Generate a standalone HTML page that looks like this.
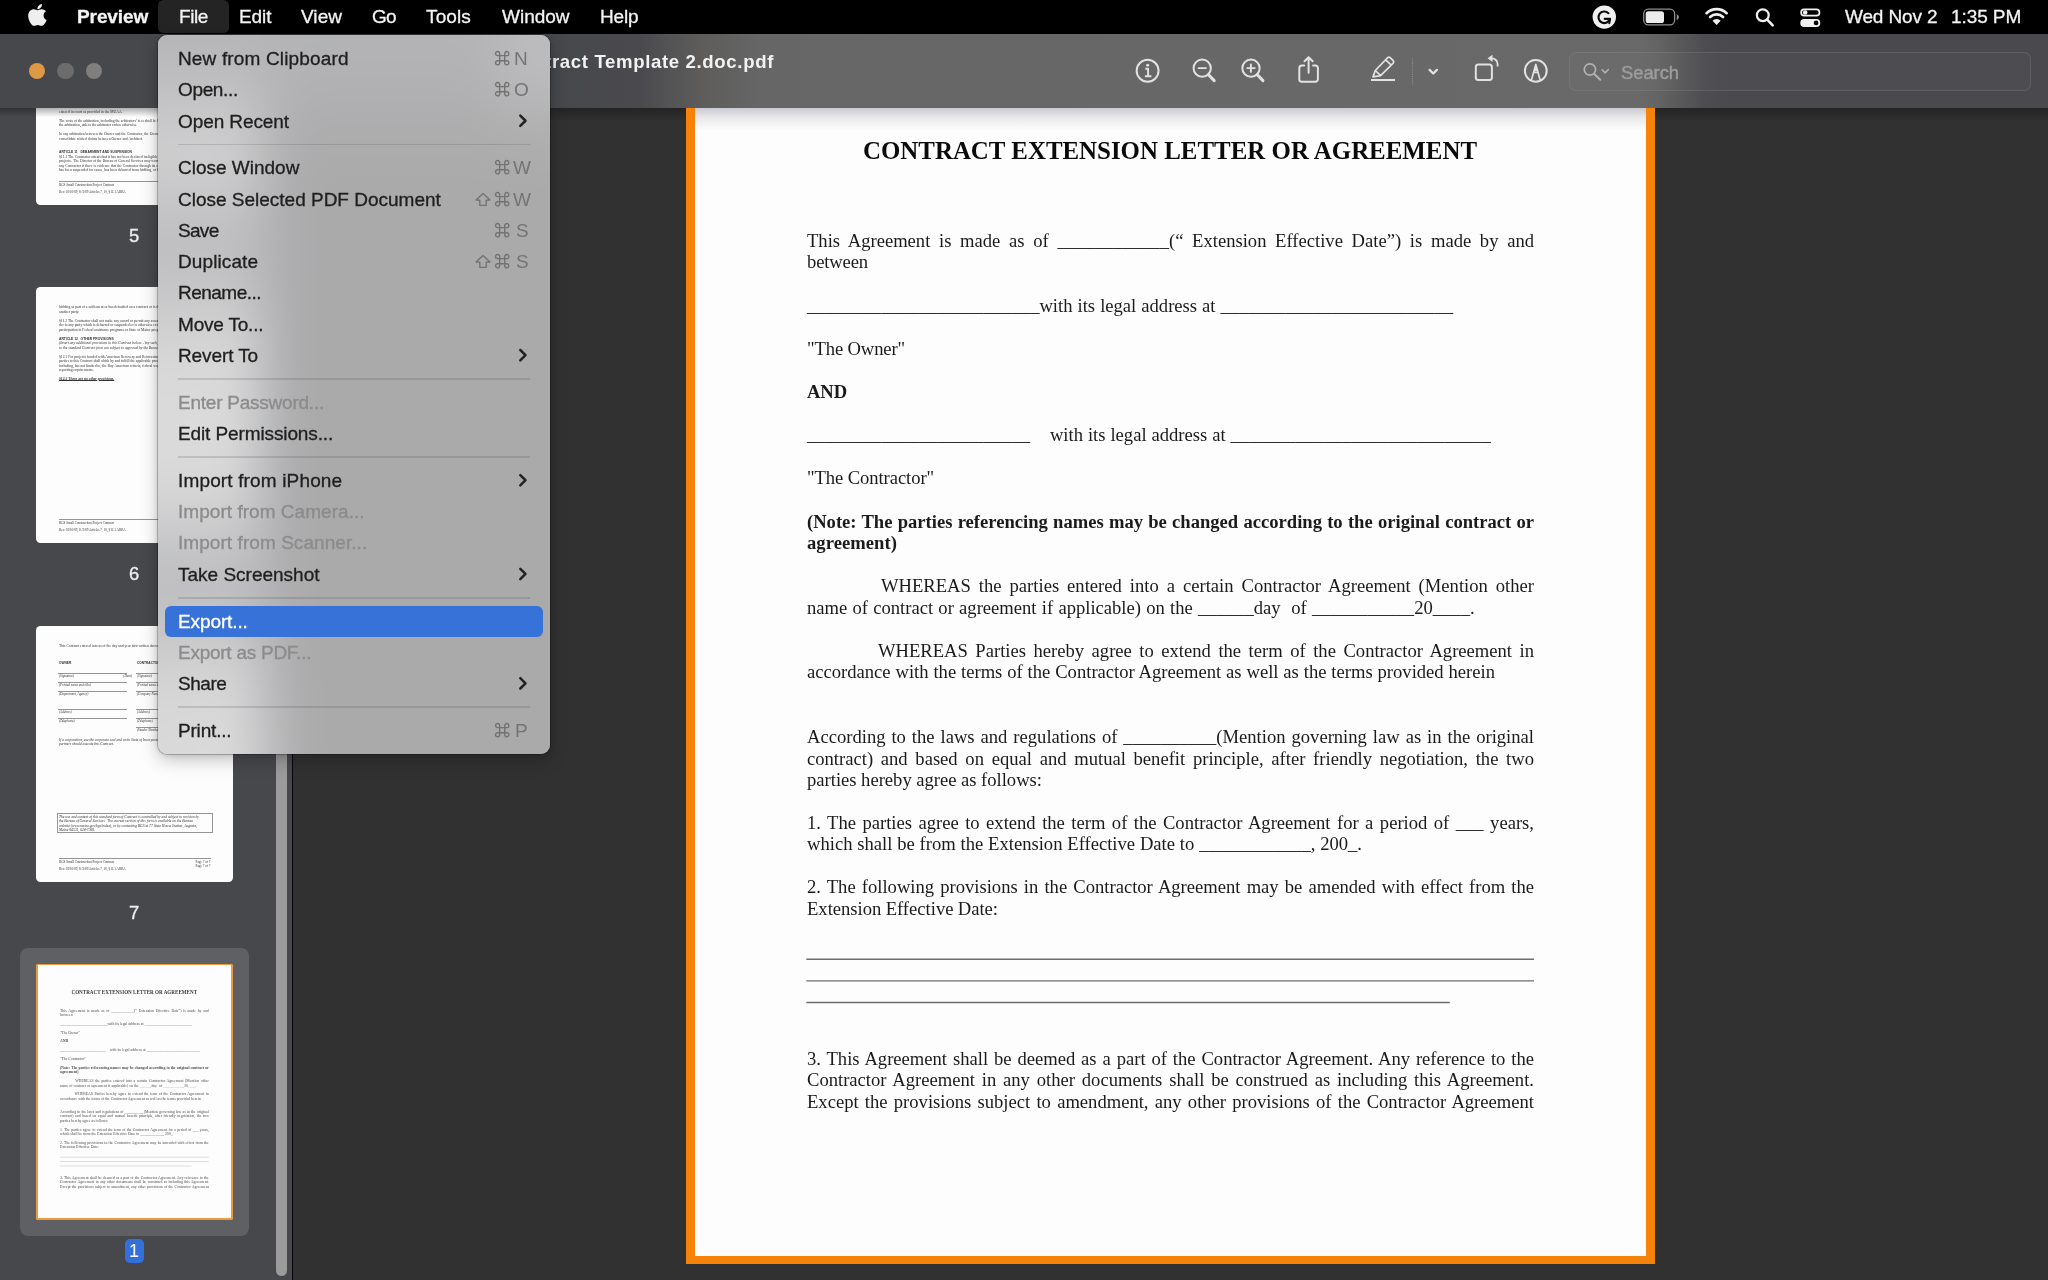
<!DOCTYPE html>
<html><head><meta charset="utf-8"><title>Preview</title>
<style>
*{box-sizing:border-box;margin:0;padding:0}
html,body{width:2048px;height:1280px;overflow:hidden;background:#313131;font-family:"Liberation Sans",sans-serif}
.a{position:absolute}
.t{position:absolute;white-space:pre;will-change:transform}
.bm{display:inline-block;width:0;height:0}
svg{position:absolute;overflow:visible}
#sidebar{left:0;top:33px;width:291.5px;height:1247px;background:#47484c}
#divider{left:291.5px;top:33px;width:1.6px;height:1247px;background:#050505}
#thumbbar{left:276.1px;top:700px;width:11px;height:575.9px;border-radius:5.5px;background:#9b9b9b}
#sbshadow{left:0;top:108px;width:291.5px;height:9px;background:linear-gradient(rgba(0,0,0,.30),rgba(0,0,0,0))}
.th{background:#fdfdfd;border-radius:4.5px}
#sel{left:20px;top:948.4px;width:229px;height:287.3px;border-radius:8px;background:#5f6063}
#badge{left:124.9px;top:1238.9px;width:18.9px;height:24.1px;border-radius:5px;background:#3470db}
#page{left:686px;top:20px;width:969px;height:1244.2px;background:#f5830a}
#pagein{left:695px;top:29px;width:951.3px;height:1226.8px;background:#fdfdfd}
#pgshadow{left:695px;top:108px;width:951.3px;height:22px;background:linear-gradient(#c9cbd0,#e9e9ea 45%,#fdfdfd)}
#cshadowL{left:293px;top:108px;width:393px;height:14px;background:linear-gradient(rgba(0,0,0,.28),rgba(0,0,0,0))}
#cshadowR{left:1655px;top:108px;width:393px;height:14px;background:linear-gradient(rgba(0,0,0,.28),rgba(0,0,0,0))}
#toolbar{left:0;top:33px;width:2048px;height:75px;background:
  linear-gradient(90deg,#47484c 0,#47484c 560px,#4a4a4e 640px,#5d5c5b 700px,#666666 760px,#696969 1640px,#636262 1662px,#565558 1685px,#4d4d51 1705px,#4a4a4e 1730px,#4a4a4e 100%)}
#sbtitle{left:0;top:33px;width:291.5px;height:75px;background:#47484c}
#menubar{left:0;top:0;width:2048px;height:33.7px;background:#000}
#filehl{left:158px;top:0;width:71px;height:33.4px;border-radius:5.5px;background:#242424}
.tl{border-radius:50%;width:16.4px;height:16.4px;top:62.9px}
#menu{left:158px;top:35.4px;width:392.4px;height:718.8px;border-radius:9px;overflow:hidden;background:#a9aaa9;
  box-shadow:0 0 0 .8px rgba(0,0,0,.30),0 6px 18px rgba(0,0,0,.24),0 0 7px rgba(0,0,0,.14)}
#mbk{left:-158px;top:-35.4px;width:10px;height:10px;transform:scaleY(2);transform-origin:0 0}
#mbk2{position:absolute;left:0;top:0;width:10px;height:10px;filter:blur(25px)}
#mbk3{position:absolute;left:0;top:0;width:10px;height:10px;transform:scaleY(.5);transform-origin:0 0}
#mbk3 div{position:absolute}
#mtint{left:0;top:0;width:100%;height:100%;background:rgba(209,209,210,.755)}
.sep{left:178.3px;width:352px;height:1.5px;background:rgba(60,62,66,.17)}
#exphl{left:165.2px;top:606.2px;width:378px;height:30.8px;border-radius:6px;background:#3772d8}

.ic{stroke:#e2e2e2;fill:none;stroke-width:2;stroke-linecap:round;stroke-linejoin:round}
.mi{stroke:#222;fill:none;stroke-width:2.5;stroke-linecap:round;stroke-linejoin:round}
.sc{stroke:#727272;fill:none;stroke-width:1.25;stroke-linejoin:round;stroke-linecap:round}
.tc{position:absolute;white-space:pre}
.tiny{position:absolute;white-space:pre;will-change:transform;font-family:"Liberation Serif",serif;color:#333;font-size:3.8px;line-height:4.4px}
</style></head>
<body>
<!-- content area -->
<div class="a" id="cshadowL"></div><div class="a" id="cshadowR"></div>
<div class="a" id="page"></div><div class="a" id="pagein"></div>
<svg style="left:0;top:0" width="2048" height="1280" viewBox="0 0 2048 1280"><g stroke="#6e6e6e" stroke-width="1.4" fill="none"><path d="M806.3 959.2H1534"/><path d="M806.3 980.9H1534"/><path d="M806.3 1002.5H1449.8"/></g></svg>
<div class="t" style='left:863.00px;top:137.00px;font-size:24.9px;line-height:27.614px;color:#0a0a0a;font-weight:700;font-family:"Liberation Serif", serif;word-spacing:0.090px;'>CONTRACT EXTENSION LETTER OR AGREEMENT</div>
<div class="t" style='left:807.00px;top:231.01px;font-size:18.6px;line-height:20.627px;color:#1b1b1b;font-family:"Liberation Serif", serif;word-spacing:4.036px;'>This Agreement is made as of ____________(&ldquo; Extension Effective Date&rdquo;) is made by and</div>
<div class="t" style='left:807.00px;top:252.01px;font-size:18.6px;line-height:20.627px;color:#1b1b1b;font-family:"Liberation Serif", serif;letter-spacing:-0.136px;'>between</div>
<div class="t" style='left:807.00px;top:296.00px;font-size:18.6px;line-height:20.627px;color:#1b1b1b;font-family:"Liberation Serif", serif;word-spacing:0.394px;'>_________________________with its legal address at _________________________</div>
<div class="t" style='left:807.00px;top:339.01px;font-size:18.6px;line-height:20.627px;color:#1b1b1b;font-family:"Liberation Serif", serif;letter-spacing:-0.122px;'>"The Owner"</div>
<div class="t" style='left:807.00px;top:382.00px;font-size:18.6px;line-height:20.627px;color:#1b1b1b;font-weight:700;font-family:"Liberation Serif", serif;letter-spacing:-0.099px;'>AND</div>
<div class="t" style='left:807.00px;top:425.01px;font-size:18.6px;line-height:20.627px;color:#1b1b1b;font-family:"Liberation Serif", serif;word-spacing:0.297px;'>________________________&nbsp;&nbsp;&nbsp; with its legal address at ____________________________</div>
<div class="t" style='left:807.00px;top:468.01px;font-size:18.6px;line-height:20.627px;color:#1b1b1b;font-family:"Liberation Serif", serif;letter-spacing:-0.078px;'>"The Contractor"</div>
<div class="t" style='left:807.00px;top:512.00px;font-size:18.6px;line-height:20.627px;color:#1b1b1b;font-weight:700;font-family:"Liberation Serif", serif;word-spacing:0.588px;'>(Note: The parties referencing names may be changed according to the original contract or</div>
<div class="t" style='left:807.00px;top:533.01px;font-size:18.6px;line-height:20.627px;color:#1b1b1b;font-weight:700;font-family:"Liberation Serif", serif;letter-spacing:0.052px;'>agreement)</div>
<div class="t" style='left:881.00px;top:576.00px;font-size:18.6px;line-height:20.627px;color:#1b1b1b;font-family:"Liberation Serif", serif;word-spacing:3.341px;'>WHEREAS the parties entered into a certain Contractor Agreement (Mention other</div>
<div class="t" style='left:807.00px;top:598.01px;font-size:18.6px;line-height:20.627px;color:#1b1b1b;font-family:"Liberation Serif", serif;word-spacing:0.599px;'>name of contract or agreement if applicable) on the ______day&nbsp; of ___________20____.</div>
<div class="t" style='left:878.00px;top:641.00px;font-size:18.6px;line-height:20.627px;color:#1b1b1b;font-family:"Liberation Serif", serif;word-spacing:2.862px;'>WHEREAS Parties hereby agree to extend the term of the Contractor Agreement in</div>
<div class="t" style='left:807.00px;top:662.01px;font-size:18.6px;line-height:20.627px;color:#1b1b1b;font-family:"Liberation Serif", serif;word-spacing:0.241px;'>accordance with the terms of the Contractor Agreement as well as the terms provided herein</div>
<div class="t" style='left:807.00px;top:727.01px;font-size:18.6px;line-height:20.627px;color:#1b1b1b;font-family:"Liberation Serif", serif;word-spacing:1.305px;'>According to the laws and regulations of __________(Mention governing law as in the original</div>
<div class="t" style='left:807.00px;top:749.01px;font-size:18.6px;line-height:20.627px;color:#1b1b1b;font-family:"Liberation Serif", serif;word-spacing:3.060px;'>contract) and based on equal and mutual benefit principle, after friendly negotiation, the two</div>
<div class="t" style='left:807.00px;top:770.01px;font-size:18.6px;line-height:20.627px;color:#1b1b1b;font-family:"Liberation Serif", serif;word-spacing:-0.109px;'>parties hereby agree as follows:</div>
<div class="t" style='left:807.00px;top:813.00px;font-size:18.6px;line-height:20.627px;color:#1b1b1b;font-family:"Liberation Serif", serif;word-spacing:1.814px;'>1. The parties agree to extend the term of the Contractor Agreement for a period of ___ years,</div>
<div class="t" style='left:807.00px;top:834.01px;font-size:18.6px;line-height:20.627px;color:#1b1b1b;font-family:"Liberation Serif", serif;word-spacing:0.178px;'>which shall be from the Extension Effective Date to ____________, 200_.</div>
<div class="t" style='left:807.00px;top:877.01px;font-size:18.6px;line-height:20.627px;color:#1b1b1b;font-family:"Liberation Serif", serif;word-spacing:1.484px;'>2. The following provisions in the Contractor Agreement may be amended with effect from the</div>
<div class="t" style='left:807.00px;top:899.01px;font-size:18.6px;line-height:20.627px;color:#1b1b1b;font-family:"Liberation Serif", serif;word-spacing:-0.367px;'>Extension Effective Date:</div>
<div class="t" style='left:807.00px;top:1049.00px;font-size:18.6px;line-height:20.627px;color:#1b1b1b;font-family:"Liberation Serif", serif;word-spacing:1.250px;'>3. This Agreement shall be deemed as a part of the Contractor Agreement. Any reference to the</div>
<div class="t" style='left:807.00px;top:1070.01px;font-size:18.6px;line-height:20.627px;color:#1b1b1b;font-family:"Liberation Serif", serif;word-spacing:2.190px;'>Contractor Agreement in any other documents shall be construed as including this Agreement.</div>
<div class="t" style='left:807.00px;top:1092.01px;font-size:18.6px;line-height:20.627px;color:#1b1b1b;font-family:"Liberation Serif", serif;word-spacing:1.587px;'>Except the provisions subject to amendment, any other provisions of the Contractor Agreement</div>
<div class="a" id="pgshadow"></div>
<!-- sidebar -->
<div class="a" id="sidebar"></div><div class="a" id="divider"></div>
<div class="a th" style="left:35.5px;top:-51.2px;width:197.6px;height:255.8px"></div>
<div class="a th" style="left:35.5px;top:287.3px;width:197.6px;height:255.9px"></div>
<div class="a th" style="left:35.5px;top:625.8px;width:197.6px;height:256px"></div>
<div class="tiny" style="left:58.8px;top:109.9px;font-size:3.7px;line-height:4.47px;">entered in court as provided in the MUAA.

The costs of the arbitration, including the arbitrators&rsquo; fees shall be borne equally by the parties to
the arbitration, unless the arbitrator orders otherwise.

In any arbitration between the Owner and the Contractor, the Owner shall have the right to
consolidate related claims between Owner and Architect.


<b style="font-family:'Liberation Sans';font-size:3.3px">ARTICLE 11   DEBARMENT AND SUSPENSION</b>
§11.1 The Contractor attests that it has not been declared ineligible to bid on or be awarded
projects.  The Director of the Bureau of General Services may terminate this Contract or
any Contractor if there is evidence that the Contractor through its owners or officers
has been suspended for cause, has been debarred from bidding, or has been declared ineligible.</div>
<div class="a" style="left:58.7px;top:180.8px;width:152px;height:.8px;background:#959595"></div>
<div class="tiny" style="left:58.8px;top:183.7px;font-size:3.3px;line-height:3.6px;">BGS Small Construction Project Contract

Rev. 02/10/09, 8 /3/09 Articles 7, 10, §12.1 ARRA</div>
<div class="tiny" style="left:58.7px;top:304.85px;font-size:3.7px;line-height:4.5px;">bidding as part of a settlement or has defaulted on a contract or is debarred or suspended by
another party.

§11.2 The Contractor shall not make any award or permit any award of a subcontract or purchase or-
der to any party which is debarred or suspended or is otherwise excluded from or ineligible for
participation in Federal assistance programs or State of Maine programs.

<b style="font-family:'Liberation Sans';font-size:3.3px">ARTICLE 12   OTHER PROVISIONS</b>
<i>(Insert any additional provisions to this Contract below.  Any such provisions are in addition</i>
<i>to the standard Contract form are subject to approval by the Bureau of General Services.)</i>

§12.1 For projects funded with American Recovery and Reinvestment Act of 2009 (ARRA) the
parties to this Contract shall abide by and fulfill the applicable provisions of the ARRA
including, but not limited to, the Buy American criteria, federal wage rates and reporting
reporting requirements.

<b><i><u style="text-decoration-thickness:.3px;text-underline-offset:.4px">§12.2 There are no other provisions.</u></i></b></div>
<div class="a" style="left:58.7px;top:519.3px;width:152px;height:.8px;background:#959595"></div>
<div class="tiny" style="left:58.8px;top:522.2px;font-size:3.3px;line-height:3.6px;">BGS Small Construction Project Contract

Rev. 02/10/09, 8 /3/09 Articles 7, 10, §12.1 ARRA</div>
<div class="tiny" style="left:59px;top:643.5px;font-size:3.7px;line-height:4.4px;">This Contract entered into as of the day and year first written above.</div>
<div class="tiny" style="left:59px;top:661px;font-size:3.4px;line-height:4.4px;"><b style="font-family:'Liberation Sans';font-size:3.2px">OWNER</b></div>
<div class="tiny" style="left:136.5px;top:661px;font-size:3.4px;line-height:4.4px;"><b style="font-family:'Liberation Sans';font-size:3.2px">CONTRACTOR</b></div>
<div class="a" style="left:58px;top:672.6px;width:68.7px;height:.9px;background:#959595"></div>
<div class="tiny" style="left:59px;top:673.8px;font-size:3.3px;line-height:4.4px;"><i>(Signature)                                                            (Date)</i></div>
<div class="a" style="left:135.5px;top:672.6px;width:76px;height:.9px;background:#959595"></div>
<div class="tiny" style="left:136.5px;top:673.8px;font-size:3.3px;line-height:4.4px;"><i>(Signature)                                                            (Date)</i></div>
<div class="a" style="left:58px;top:681.6px;width:68.7px;height:.9px;background:#959595"></div>
<div class="tiny" style="left:59px;top:682.8px;font-size:3.3px;line-height:4.4px;"><i>(Printed name and title)</i></div>
<div class="a" style="left:135.5px;top:681.6px;width:76px;height:.9px;background:#959595"></div>
<div class="tiny" style="left:136.5px;top:682.8px;font-size:3.3px;line-height:4.4px;"><i>(Printed name and title)</i></div>
<div class="a" style="left:58px;top:690.6px;width:68.7px;height:.9px;background:#959595"></div>
<div class="tiny" style="left:59px;top:691.8px;font-size:3.3px;line-height:4.4px;"><i>(Department, Agency)</i></div>
<div class="a" style="left:135.5px;top:690.6px;width:76px;height:.9px;background:#959595"></div>
<div class="tiny" style="left:136.5px;top:691.8px;font-size:3.3px;line-height:4.4px;"><i>(Company Name)</i></div>
<div class="a" style="left:58px;top:708.6px;width:68.7px;height:.9px;background:#959595"></div>
<div class="tiny" style="left:59px;top:709.8px;font-size:3.3px;line-height:4.4px;"><i>(Address)</i></div>
<div class="a" style="left:135.5px;top:708.6px;width:76px;height:.9px;background:#959595"></div>
<div class="tiny" style="left:136.5px;top:709.8px;font-size:3.3px;line-height:4.4px;"><i>(Address)</i></div>
<div class="a" style="left:58px;top:717.6px;width:68.7px;height:.9px;background:#959595"></div>
<div class="tiny" style="left:59px;top:718.8px;font-size:3.3px;line-height:4.4px;"><i>(Telephone)</i></div>
<div class="a" style="left:135.5px;top:717.6px;width:76px;height:.9px;background:#959595"></div>
<div class="tiny" style="left:136.5px;top:718.8px;font-size:3.3px;line-height:4.4px;"><i>(Telephone)</i></div>
<div class="a" style="left:135.5px;top:726.6px;width:76px;height:.9px;background:#959595"></div>
<div class="tiny" style="left:136.5px;top:727.8px;font-size:3.3px;line-height:4.4px;"><i>(Vendor Number)</i></div>
<div class="tiny" style="left:59px;top:737.5px;font-size:3.6px;line-height:4.3px;"><i>If a corporation, use the corporate seal and write State of Incorporation here; if a partnership, all</i>
<i>partners should execute this Contract.</i></div>
<div class="a" style="left:57.1px;top:812.7px;width:155.6px;height:20.8px;border:.9px solid #959595"></div>
<div class="tiny" style="left:59px;top:814.7px;font-size:3.65px;line-height:4.45px;"><i>The use and content of this standard form of Contract is controlled by and subject to revision by</i>
<i>the Bureau of General Services.  The current version of this form is available on the Bureau</i>
<i>website (www.maine.gov/bgs/index), or by contacting BGS at 77 State House Station, Augusta,</i>
<i>Maine 04333, 624-7360.</i></div>
<div class="a" style="left:58.7px;top:858px;width:152px;height:.8px;background:#959595"></div>
<div class="tiny" style="left:58.8px;top:860.9px;font-size:3.3px;line-height:3.6px;">BGS Small Construction Project Contract

Rev. 02/10/09, 8 /3/09 Articles 7, 10, §12.1 ARRA</div>
<div class="tiny" style="left:170px;top:860.9px;font-size:3.3px;line-height:3.6px;width:40.5px;text-align:right;">Page 7 of 7
Page 7 of 7</div>
<div class="a" id="sel"></div>
<div class="a" style="left:35.9px;top:963.8px;width:197px;height:256.2px;background:#ea9a40;border-radius:1.2px"></div>
<div class="a" style="left:37.5px;top:965.4px;width:193.8px;height:253px;background:#fdfdfd"></div>
<div class="a" style="left:-104.83px;top:961.22px;width:0;height:0;transform:scale(0.2045);transform-origin:0 0;opacity:.82"><div class="tc " style='left:863.00px;top:137.00px;font-size:24.9px;line-height:27.614px;color:#0a0a0a;font-weight:700;font-family:"Liberation Serif", serif;word-spacing:0.090px;'>CONTRACT EXTENSION LETTER OR AGREEMENT</div>
<div class="tc " style='left:807.00px;top:231.01px;font-size:18.6px;line-height:20.627px;color:#1b1b1b;font-family:"Liberation Serif", serif;word-spacing:4.036px;'>This Agreement is made as of ____________(&ldquo; Extension Effective Date&rdquo;) is made by and</div>
<div class="tc " style='left:807.00px;top:252.01px;font-size:18.6px;line-height:20.627px;color:#1b1b1b;font-family:"Liberation Serif", serif;letter-spacing:-0.136px;'>between</div>
<div class="tc " style='left:807.00px;top:296.00px;font-size:18.6px;line-height:20.627px;color:#1b1b1b;font-family:"Liberation Serif", serif;word-spacing:0.394px;'>_________________________with its legal address at _________________________</div>
<div class="tc " style='left:807.00px;top:339.01px;font-size:18.6px;line-height:20.627px;color:#1b1b1b;font-family:"Liberation Serif", serif;letter-spacing:-0.122px;'>"The Owner"</div>
<div class="tc " style='left:807.00px;top:382.00px;font-size:18.6px;line-height:20.627px;color:#1b1b1b;font-weight:700;font-family:"Liberation Serif", serif;letter-spacing:-0.099px;'>AND</div>
<div class="tc " style='left:807.00px;top:425.01px;font-size:18.6px;line-height:20.627px;color:#1b1b1b;font-family:"Liberation Serif", serif;word-spacing:0.297px;'>________________________&nbsp;&nbsp;&nbsp; with its legal address at ____________________________</div>
<div class="tc " style='left:807.00px;top:468.01px;font-size:18.6px;line-height:20.627px;color:#1b1b1b;font-family:"Liberation Serif", serif;letter-spacing:-0.078px;'>"The Contractor"</div>
<div class="tc " style='left:807.00px;top:512.00px;font-size:18.6px;line-height:20.627px;color:#1b1b1b;font-weight:700;font-family:"Liberation Serif", serif;word-spacing:0.588px;'>(Note: The parties referencing names may be changed according to the original contract or</div>
<div class="tc " style='left:807.00px;top:533.01px;font-size:18.6px;line-height:20.627px;color:#1b1b1b;font-weight:700;font-family:"Liberation Serif", serif;letter-spacing:0.052px;'>agreement)</div>
<div class="tc " style='left:881.00px;top:576.00px;font-size:18.6px;line-height:20.627px;color:#1b1b1b;font-family:"Liberation Serif", serif;word-spacing:3.341px;'>WHEREAS the parties entered into a certain Contractor Agreement (Mention other</div>
<div class="tc " style='left:807.00px;top:598.01px;font-size:18.6px;line-height:20.627px;color:#1b1b1b;font-family:"Liberation Serif", serif;word-spacing:0.599px;'>name of contract or agreement if applicable) on the ______day&nbsp; of ___________20____.</div>
<div class="tc " style='left:878.00px;top:641.00px;font-size:18.6px;line-height:20.627px;color:#1b1b1b;font-family:"Liberation Serif", serif;word-spacing:2.862px;'>WHEREAS Parties hereby agree to extend the term of the Contractor Agreement in</div>
<div class="tc " style='left:807.00px;top:662.01px;font-size:18.6px;line-height:20.627px;color:#1b1b1b;font-family:"Liberation Serif", serif;word-spacing:0.241px;'>accordance with the terms of the Contractor Agreement as well as the terms provided herein</div>
<div class="tc " style='left:807.00px;top:727.01px;font-size:18.6px;line-height:20.627px;color:#1b1b1b;font-family:"Liberation Serif", serif;word-spacing:1.305px;'>According to the laws and regulations of __________(Mention governing law as in the original</div>
<div class="tc " style='left:807.00px;top:749.01px;font-size:18.6px;line-height:20.627px;color:#1b1b1b;font-family:"Liberation Serif", serif;word-spacing:3.060px;'>contract) and based on equal and mutual benefit principle, after friendly negotiation, the two</div>
<div class="tc " style='left:807.00px;top:770.01px;font-size:18.6px;line-height:20.627px;color:#1b1b1b;font-family:"Liberation Serif", serif;word-spacing:-0.109px;'>parties hereby agree as follows:</div>
<div class="tc " style='left:807.00px;top:813.00px;font-size:18.6px;line-height:20.627px;color:#1b1b1b;font-family:"Liberation Serif", serif;word-spacing:1.814px;'>1. The parties agree to extend the term of the Contractor Agreement for a period of ___ years,</div>
<div class="tc " style='left:807.00px;top:834.01px;font-size:18.6px;line-height:20.627px;color:#1b1b1b;font-family:"Liberation Serif", serif;word-spacing:0.178px;'>which shall be from the Extension Effective Date to ____________, 200_.</div>
<div class="tc " style='left:807.00px;top:877.01px;font-size:18.6px;line-height:20.627px;color:#1b1b1b;font-family:"Liberation Serif", serif;word-spacing:1.484px;'>2. The following provisions in the Contractor Agreement may be amended with effect from the</div>
<div class="tc " style='left:807.00px;top:899.01px;font-size:18.6px;line-height:20.627px;color:#1b1b1b;font-family:"Liberation Serif", serif;word-spacing:-0.367px;'>Extension Effective Date:</div>
<div class="tc " style='left:807.00px;top:1049.00px;font-size:18.6px;line-height:20.627px;color:#1b1b1b;font-family:"Liberation Serif", serif;word-spacing:1.250px;'>3. This Agreement shall be deemed as a part of the Contractor Agreement. Any reference to the</div>
<div class="tc " style='left:807.00px;top:1070.01px;font-size:18.6px;line-height:20.627px;color:#1b1b1b;font-family:"Liberation Serif", serif;word-spacing:2.190px;'>Contractor Agreement in any other documents shall be construed as including this Agreement.</div>
<div class="tc " style='left:807.00px;top:1092.01px;font-size:18.6px;line-height:20.627px;color:#1b1b1b;font-family:"Liberation Serif", serif;word-spacing:1.587px;'>Except the provisions subject to amendment, any other provisions of the Contractor Agreement</div><svg style="left:0;top:0" width="2048" height="1280" viewBox="0 0 2048 1280"><g stroke="#6e6e6e" stroke-width="1.4" fill="none"><path d="M806.3 959.2H1534"/><path d="M806.3 980.9H1534"/><path d="M806.3 1002.5H1449.8"/></g></svg></div>
<div class="a" id="badge"></div><div class="t" style='left:118.90px;top:1241.01px;font-size:18px;line-height:20.124px;color:#fff;width:30px;text-align:center;'>1</div>
<div class="t" style='left:119.40px;top:226.01px;font-size:18.4px;line-height:20.571px;color:#ededed;width:30px;text-align:center;-webkit-text-stroke:.35px #ededed;'>5</div>
<div class="t" style='left:119.40px;top:564.01px;font-size:18.4px;line-height:20.571px;color:#ededed;width:30px;text-align:center;-webkit-text-stroke:.35px #ededed;'>6</div>
<div class="t" style='left:119.40px;top:903.00px;font-size:18.4px;line-height:20.571px;color:#ededed;width:30px;text-align:center;-webkit-text-stroke:.35px #ededed;'>7</div>
<div class="a" id="thumbbar"></div><div class="a" id="sbshadow"></div>
<!-- toolbar -->
<div class="a" id="toolbar"></div>
<div class="a" id="sbtitle"></div>
<div class="a tl" style="left:28.9px;background:#de9946"></div>
<div class="a tl" style="left:57.3px;background:#6c6c6c"></div>
<div class="a tl" style="left:85.6px;background:#807f7e"></div>
<div class="a" style="left:1569.2px;top:52px;width:461.6px;height:38.6px;border-radius:7px;border:1px solid rgba(140,140,140,.30);background:rgba(255,255,255,.02)"></div>
<svg style="left:0;top:0" width="2048" height="120" viewBox="0 0 2048 120"><g class="ic"><circle cx="1147.6" cy="70.8" r="10.95"/><path d="M1145.3 68.7h2.8v7.500M1144.900 76.300h6.500" stroke-width="1.9" stroke-linecap="butt"/><circle cx="1147.7" cy="65.3" r="1.45" fill="#e2e2e2" stroke="none"/><circle cx="1202.2" cy="68.2" r="8.65"/><path d="M1208.5 74.7l5.700 5.900" stroke-width="3"/><path d="M1198.5 68.100h7.400" stroke-width="1.9"/><circle cx="1251.0" cy="68.2" r="8.65"/><path d="M1257.3 74.7l5.700 5.900" stroke-width="3"/><path d="M1247.3 68.100h7.400" stroke-width="1.9"/><path d="M1250.900 64.500v7.400" stroke-width="1.9"/><path d="M1304.100 65.500H1301.800a2.500 2.500 0 0 0-2.500 2.500V79.250a2.500 2.500 0 0 0 2.500 2.500H1315.400a2.500 2.500 0 0 0 2.500-2.500V68a2.500 2.500 0 0 0-2.500-2.500H1313.100"/><path d="M1308.600 72.700V57.500M1304.500 61.300L1308.600 57.200L1312.700 61.300"/><path d="M1371 80H1395" stroke-width="2" stroke-linecap="butt"/><path d="M1373 76.900L1375.300 70.500L1387.700 57.700a1.800 1.800 0 0 1 2.500 0L1393.200 60.600a1.800 1.800 0 0 1 0 2.500L1380.600 75.600ZM1375.300 70.500L1380.600 75.600M1385.700 59.800L1391.200 65.200" stroke-width="1.7"/><path d="M1429.600 69.900L1433.250 73.550L1436.900 69.900" stroke-width="2.3"/><rect x="1475.800" y="64.400" width="16.100" height="15.700" rx="2.600"/><path d="M1491.800 58.300a5.800 5.800 0 0 1 5.800 5.800v1.700" stroke-width="1.800"/><path d="M1487.500 58.300l5-3.600v7.200z" fill="#e2e2e2" stroke="none"/><circle cx="1535.800" cy="70.800" r="10.900"/><path d="M1531.600 79.400L1535.800 64.400L1540 79.400M1533.700 72.400h4.200" stroke-width="1.700"/><path d="M1535.800 64.200l-1.900 6.800h3.800z" fill="#e2e2e2" stroke="none"/></g><path d="M1412.500 58.500V85.500" stroke="#8f8f8f" stroke-width="1" stroke-dasharray="1 1.200" fill="none"/><g class="ic" style="stroke:#b2b2b3"><circle cx="1589.900" cy="69.500" r="5.650" stroke-width="1.700"/><path d="M1594.200 74l6.100 5.800" stroke-width="2"/><path d="M1602.100 69.800l3 3.100 3.300-3.400" stroke-width="1.600"/></g></svg>
<div class="t" style='left:507.00px;top:52.01px;font-size:18.6px;line-height:20.795px;color:#f2f2f2;font-weight:700;letter-spacing:0.642px;'>Contract Template 2.doc.pdf</div>
<div class="t" style='left:1620.70px;top:63.01px;font-size:18.4px;line-height:20.571px;color:#9c9c9d;letter-spacing:-0.047px;-webkit-text-stroke:.45px #9c9c9d;'>Search</div>
<!-- menubar -->
<div class="a" id="menubar"></div><div class="a" id="filehl"></div>
<svg style="left:28.3px;top:3.4px" width="18.8" height="23.8" viewBox="0 26 384 460"><path d="M318.7 268.7c-.2-36.7 16.4-64.4 50-84.8-18.8-26.9-47.2-41.7-84.7-44.6-35.5-2.8-74.3 20.7-88.5 20.7-15 0-49.4-19.7-76.400-19.700C63.300 141.200 4 184.800 4 273.500q0 39.300 14.400 81.200c12.800 36.700 59 126.700 107.200 125.200 25.200-.6 43-17.900 75.800-17.900 31.800 0 48.300 17.900 76.400 17.900 48.600-.7 90.400-82.500 102.600-119.300-65.200-30.700-61.700-90-61.700-91.900zm-56.600-164.200c27.300-32.400 24.800-61.900 24-72.500-24.100 1.400-52 16.400-67.900 34.900-17.500 19.800-27.800 44.300-25.600 71.900 26.100 2 49.900-11.400 69.500-34.300z" fill="#efefef"/></svg>
<svg style="left:0;top:0" width="2048" height="34" viewBox="0 0 2048 34"><circle cx="1604.300" cy="17.100" r="11.700" fill="#f0f0f0"/><path d="M1608.400 13.200a5.800 5.800 0 1 0 1.500 5.600h-5.200" fill="none" stroke="#0a0a0a" stroke-width="2.200" stroke-linecap="round" stroke-linejoin="round"/><path d="M1610.200 18.900l-.9 4.500" stroke="#0a0a0a" stroke-width="1.900" stroke-linecap="round"/><rect x="1643.700" y="9.200" width="30.900" height="15.600" rx="4.600" fill="none" stroke="#8e8e8e" stroke-width="1.300"/><rect x="1645.700" y="11.200" width="18.300" height="11.800" rx="2.600" fill="#ececec"/><path d="M1676.700 14.200v5.800c1.500-.5 2.200-1.600 2.200-2.900s-.7-2.400-2.200-2.900z" fill="#8e8e8e"/><path d="M1706.57 13.15A14.7 14.7 0 0 1 1726.63 13.15" fill="none" stroke="#f0f0f0" stroke-width="2.700" stroke-linecap="round"/><path d="M1710.12 16.95A9.5 9.5 0 0 1 1723.08 16.95" fill="none" stroke="#f0f0f0" stroke-width="2.700" stroke-linecap="round"/><path d="M1716.600 24.900l-4.100-4.200a5.800 5.800 0 0 1 8.200 0z" fill="#f0f0f0"/><circle cx="1762.800" cy="15.200" r="5.900" fill="none" stroke="#f0f0f0" stroke-width="2.200"/><path d="M1767.200 19.700l5.500 5.600" stroke="#f0f0f0" stroke-width="2.600" stroke-linecap="round"/><rect x="1801.100" y="9.400" width="18.400" height="6.300" rx="3.150" fill="none" stroke="#f0f0f0" stroke-width="1.700"/><circle cx="1805.200" cy="12.550" r="2.300" fill="#f0f0f0"/><rect x="1800.300" y="19" width="20" height="7.900" rx="3.950" fill="#f0f0f0"/><circle cx="1816.100" cy="22.950" r="2.400" fill="#000"/></svg>
<div class="t" style='left:76.60px;top:6.00px;font-size:19px;line-height:21.242px;color:#f4f4f4;font-weight:700;letter-spacing:-0.090px;-webkit-text-stroke:.3px #f4f4f4;'>Preview</div>
<div class="t" style='left:179.00px;top:6.00px;font-size:19px;line-height:21.242px;color:#f4f4f4;letter-spacing:-0.406px;-webkit-text-stroke:.3px #f4f4f4;'>File</div>
<div class="t" style='left:238.50px;top:6.00px;font-size:19px;line-height:21.242px;color:#f4f4f4;letter-spacing:-0.062px;-webkit-text-stroke:.3px #f4f4f4;'>Edit</div>
<div class="t" style='left:301.00px;top:6.00px;font-size:19px;line-height:21.242px;color:#f4f4f4;letter-spacing:0.039px;-webkit-text-stroke:.3px #f4f4f4;'>View</div>
<div class="t" style='left:372.00px;top:6.00px;font-size:19px;line-height:21.242px;color:#f4f4f4;letter-spacing:-0.680px;-webkit-text-stroke:.3px #f4f4f4;'>Go</div>
<div class="t" style='left:426.00px;top:6.00px;font-size:19px;line-height:21.242px;color:#f4f4f4;letter-spacing:0.128px;-webkit-text-stroke:.3px #f4f4f4;'>Tools</div>
<div class="t" style='left:501.50px;top:6.00px;font-size:19px;line-height:21.242px;color:#f4f4f4;letter-spacing:-0.013px;-webkit-text-stroke:.3px #f4f4f4;'>Window</div>
<div class="t" style='left:599.50px;top:6.00px;font-size:19px;line-height:21.242px;color:#f4f4f4;letter-spacing:-0.145px;-webkit-text-stroke:.3px #f4f4f4;'>Help</div>
<div class="t" style='left:1845.40px;top:6.00px;font-size:19px;line-height:21.242px;color:#f4f4f4;letter-spacing:-0.149px;-webkit-text-stroke:.3px #f4f4f4;'>Wed Nov 2</div>
<div class="t" style='left:1950.80px;top:6.00px;font-size:19px;line-height:21.242px;color:#f4f4f4;letter-spacing:-0.081px;-webkit-text-stroke:.3px #f4f4f4;'>1:35 PM</div>
<!-- dropdown -->
<div class="a" id="menu"><div class="a" id="mbk"><div id="mbk2"><div id="mbk3"><div style="left:-200px;top:-200px;width:1200px;height:1400px;background:#313131;"></div><div style="left:-200px;top:-200px;width:491.5px;height:1400px;background:#47484c;"></div><div style="left:291.5px;top:108px;width:1.6px;height:1100px;background:#050505;"></div><div style="left:686px;top:108px;width:400px;height:1156px;background:#f5830a;"></div><div style="left:695px;top:108px;width:400px;height:1148px;background:#fdfdfd;"></div><div style="left:35.5px;top:-51.2px;width:223.5px;height:255.9px;background:#fbfbfb;border-radius:4px"></div><div style="left:35.5px;top:287.3px;width:223.5px;height:255.9px;background:#fbfbfb;border-radius:4px"></div><div style="left:35.5px;top:625.8px;width:223.5px;height:255.9px;background:#fbfbfb;border-radius:4px"></div><div style="left:58px;top:110px;width:154px;height:64px;background:rgba(0,0,0,.07);"></div><div style="left:58px;top:305px;width:154px;height:78px;background:rgba(0,0,0,.07);"></div><div style="left:58px;top:644px;width:154px;height:104px;background:rgba(0,0,0,.07);"></div><div style="left:58px;top:812px;width:154px;height:22px;background:rgba(0,0,0,.07);"></div><div style="left:276.1px;top:700px;width:11px;height:500px;background:#9b9b9b;"></div><div style="left:-200px;top:-200px;width:1200px;height:308px;background:#5c5d60;"></div><div style="left:700px;top:-200px;width:400px;height:308px;background:#676767;"></div><div style="left:500px;top:48.5px;width:274px;height:30px;background:#f2f2f2;"></div></div></div></div><div class="a" id="mtint"></div></div>
<div class="a sep" style="top:143.85px"></div>
<div class="a sep" style="top:378.25px"></div>
<div class="a sep" style="top:456.40px"></div>
<div class="a sep" style="top:597.05px"></div>
<div class="a sep" style="top:706.45px"></div>
<div class="a" id="exphl"></div>
<svg style="left:0;top:0" width="600" height="760" viewBox="0 0 600 760"><path class="mi" d="M520.3 115.60L525.5 120.75L520.3 125.90"/><path class="mi" d="M520.3 350.00L525.5 355.15L520.3 360.30"/><path class="mi" d="M520.3 475.05L525.5 480.20L520.3 485.35"/><path class="mi" d="M520.3 568.80L525.5 573.95L520.3 579.10"/><path class="mi" d="M520.3 678.20L525.5 683.35L520.3 688.50"/></svg>
<svg style="left:494.05px;top:50.05px" width="16.4" height="16.4" viewBox="0 0 15 15"><path class="sc" d="M5.2 5.200H9.800V9.800H5.200ZM5.200 5.200V3.400A1.900 1.900 0 1 0 3.300 5.200ZM9.800 5.200H11.600A1.900 1.900 0 1 0 9.800 3.400ZM9.800 9.800V11.600A1.900 1.900 0 1 0 11.700 9.800ZM5.200 9.800H3.400A1.900 1.900 0 1 0 5.200 11.600Z"/></svg>
<svg style="left:494.05px;top:81.3px" width="16.4" height="16.4" viewBox="0 0 15 15"><path class="sc" d="M5.2 5.200H9.800V9.800H5.200ZM5.200 5.200V3.400A1.900 1.900 0 1 0 3.300 5.200ZM9.800 5.200H11.600A1.900 1.900 0 1 0 9.800 3.400ZM9.800 9.800V11.600A1.900 1.900 0 1 0 11.700 9.800ZM5.200 9.800H3.400A1.900 1.900 0 1 0 5.200 11.600Z"/></svg>
<svg style="left:494.05px;top:159.45000000000002px" width="16.4" height="16.4" viewBox="0 0 15 15"><path class="sc" d="M5.2 5.200H9.800V9.800H5.200ZM5.200 5.200V3.400A1.900 1.900 0 1 0 3.300 5.200ZM9.800 5.200H11.600A1.900 1.900 0 1 0 9.800 3.400ZM9.800 9.800V11.600A1.900 1.900 0 1 0 11.700 9.800ZM5.200 9.800H3.400A1.900 1.900 0 1 0 5.200 11.600Z"/></svg>
<svg style="left:494.05px;top:190.70000000000002px" width="16.4" height="16.4" viewBox="0 0 15 15"><path class="sc" d="M5.2 5.200H9.800V9.800H5.200ZM5.200 5.200V3.400A1.900 1.900 0 1 0 3.300 5.200ZM9.800 5.200H11.600A1.900 1.900 0 1 0 9.800 3.400ZM9.800 9.800V11.600A1.900 1.900 0 1 0 11.700 9.800ZM5.200 9.800H3.400A1.900 1.900 0 1 0 5.200 11.600Z"/></svg>
<svg style="left:494.05px;top:221.95000000000002px" width="16.4" height="16.4" viewBox="0 0 15 15"><path class="sc" d="M5.2 5.200H9.800V9.800H5.200ZM5.200 5.200V3.400A1.900 1.900 0 1 0 3.300 5.200ZM9.800 5.200H11.600A1.900 1.900 0 1 0 9.800 3.400ZM9.800 9.800V11.600A1.900 1.900 0 1 0 11.700 9.800ZM5.200 9.800H3.400A1.900 1.900 0 1 0 5.200 11.600Z"/></svg>
<svg style="left:494.05px;top:253.2px" width="16.4" height="16.4" viewBox="0 0 15 15"><path class="sc" d="M5.2 5.200H9.800V9.800H5.200ZM5.200 5.200V3.400A1.900 1.900 0 1 0 3.300 5.200ZM9.800 5.200H11.600A1.900 1.900 0 1 0 9.800 3.400ZM9.800 9.800V11.600A1.900 1.900 0 1 0 11.700 9.800ZM5.200 9.800H3.400A1.900 1.900 0 1 0 5.200 11.600Z"/></svg>
<svg style="left:494.05px;top:722.05px" width="16.4" height="16.4" viewBox="0 0 15 15"><path class="sc" d="M5.2 5.200H9.800V9.800H5.200ZM5.200 5.200V3.400A1.900 1.900 0 1 0 3.300 5.200ZM9.800 5.200H11.600A1.900 1.900 0 1 0 9.800 3.400ZM9.800 9.800V11.600A1.900 1.900 0 1 0 11.700 9.800ZM5.200 9.800H3.400A1.900 1.900 0 1 0 5.200 11.600Z"/></svg>
<svg style="left:474.6px;top:190.85px" width="16" height="16" viewBox="0 0 15 15"><path class="sc" d="M7.500 2.300L14 8.500H10.500V13.500H4.500V8.500H1Z"/></svg>
<svg style="left:474.6px;top:253.34999999999997px" width="16" height="16" viewBox="0 0 15 15"><path class="sc" d="M7.500 2.300L14 8.500H10.500V13.500H4.500V8.500H1Z"/></svg>
<div class="t" style='left:178.30px;top:48.00px;font-size:19px;line-height:21.242px;color:#1f1f1f;letter-spacing:0.150px;-webkit-text-stroke:.32px #1f1f1f;'>New from Clipboard</div>
<div class="t" style='left:178.30px;top:79.00px;font-size:19px;line-height:21.242px;color:#1f1f1f;letter-spacing:-0.347px;-webkit-text-stroke:.32px #1f1f1f;'>Open...</div>
<div class="t" style='left:178.30px;top:111.00px;font-size:19px;line-height:21.242px;color:#1f1f1f;letter-spacing:-0.088px;-webkit-text-stroke:.32px #1f1f1f;'>Open Recent</div>
<div class="t" style='left:178.30px;top:157.00px;font-size:19px;line-height:21.242px;color:#1f1f1f;letter-spacing:-0.003px;-webkit-text-stroke:.32px #1f1f1f;'>Close Window</div>
<div class="t" style='left:178.30px;top:189.00px;font-size:19px;line-height:21.242px;color:#1f1f1f;letter-spacing:-0.006px;-webkit-text-stroke:.32px #1f1f1f;'>Close Selected PDF Document</div>
<div class="t" style='left:178.30px;top:220.00px;font-size:19px;line-height:21.242px;color:#1f1f1f;letter-spacing:-0.703px;-webkit-text-stroke:.32px #1f1f1f;'>Save</div>
<div class="t" style='left:178.30px;top:251.00px;font-size:19px;line-height:21.242px;color:#1f1f1f;letter-spacing:0.098px;-webkit-text-stroke:.32px #1f1f1f;'>Duplicate</div>
<div class="t" style='left:178.30px;top:282.00px;font-size:19px;line-height:21.242px;color:#1f1f1f;letter-spacing:-0.517px;-webkit-text-stroke:.32px #1f1f1f;'>Rename...</div>
<div class="t" style='left:178.30px;top:314.00px;font-size:19px;line-height:21.242px;color:#1f1f1f;letter-spacing:-0.201px;-webkit-text-stroke:.32px #1f1f1f;'>Move To...</div>
<div class="t" style='left:178.30px;top:345.00px;font-size:19px;line-height:21.242px;color:#1f1f1f;letter-spacing:-0.097px;-webkit-text-stroke:.32px #1f1f1f;'>Revert To</div>
<div class="t" style='left:178.30px;top:392.01px;font-size:19px;line-height:21.242px;color:#8b8b8b;letter-spacing:-0.233px;-webkit-text-stroke:.32px #8b8b8b;'>Enter Password...</div>
<div class="t" style='left:178.30px;top:423.01px;font-size:19px;line-height:21.242px;color:#1f1f1f;letter-spacing:-0.112px;-webkit-text-stroke:.32px #1f1f1f;'>Edit Permissions...</div>
<div class="t" style='left:178.30px;top:470.00px;font-size:19px;line-height:21.242px;color:#1f1f1f;letter-spacing:0.151px;-webkit-text-stroke:.32px #1f1f1f;'>Import from iPhone</div>
<div class="t" style='left:178.30px;top:501.00px;font-size:19px;line-height:21.242px;color:#8b8b8b;letter-spacing:0.037px;-webkit-text-stroke:.32px #8b8b8b;'>Import from Camera...</div>
<div class="t" style='left:178.30px;top:532.00px;font-size:19px;line-height:21.242px;color:#8b8b8b;letter-spacing:0.061px;-webkit-text-stroke:.32px #8b8b8b;'>Import from Scanner...</div>
<div class="t" style='left:178.30px;top:564.00px;font-size:19px;line-height:21.242px;color:#1f1f1f;letter-spacing:-0.002px;-webkit-text-stroke:.32px #1f1f1f;'>Take Screenshot</div>
<div class="t" style='left:178.30px;top:611.01px;font-size:19px;line-height:21.242px;color:#fff;letter-spacing:-0.106px;-webkit-text-stroke:.32px #fff;'>Export...</div>
<div class="t" style='left:178.30px;top:642.01px;font-size:19px;line-height:21.242px;color:#8b8b8b;letter-spacing:-0.255px;-webkit-text-stroke:.32px #8b8b8b;'>Export as PDF...</div>
<div class="t" style='left:178.30px;top:673.01px;font-size:19px;line-height:21.242px;color:#1f1f1f;letter-spacing:-0.441px;-webkit-text-stroke:.32px #1f1f1f;'>Share</div>
<div class="t" style='left:178.30px;top:720.00px;font-size:19px;line-height:21.242px;color:#1f1f1f;letter-spacing:-0.188px;-webkit-text-stroke:.32px #1f1f1f;'>Print...</div>
<div class="t" style='left:514.45px;top:48.00px;font-size:19px;line-height:21.242px;color:#747474;letter-spacing:0.566px;'>N</div>
<div class="t" style='left:514.45px;top:79.00px;font-size:19px;line-height:21.242px;color:#747474;letter-spacing:0.019px;'>O</div>
<div class="t" style='left:513.40px;top:157.00px;font-size:19px;line-height:21.242px;color:#747474;letter-spacing:-1.137px;'>W</div>
<div class="t" style='left:513.40px;top:189.00px;font-size:19px;line-height:21.242px;color:#747474;letter-spacing:-1.137px;'>W</div>
<div class="t" style='left:515.50px;top:220.00px;font-size:19px;line-height:21.242px;color:#747474;letter-spacing:0.012px;'>S</div>
<div class="t" style='left:515.50px;top:251.00px;font-size:19px;line-height:21.242px;color:#747474;letter-spacing:0.012px;'>S</div>
<div class="t" style='left:515.30px;top:720.00px;font-size:19px;line-height:21.242px;color:#747474;letter-spacing:-0.487px;'>P</div>
</body></html>
